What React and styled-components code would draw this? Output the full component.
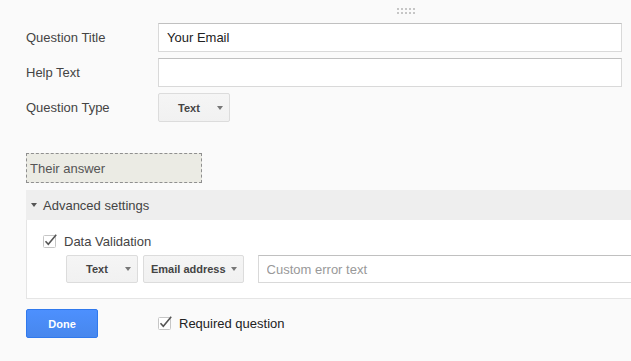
import styled, { createGlobalStyle } from "styled-components";

const GlobalStyle = createGlobalStyle`
  html, body {
    margin: 0;
    padding: 0;
    background: #fafafa;
    font-family: "Liberation Sans", Arial, sans-serif;
    overflow: hidden;
  }
`;

const Page = styled.div`
  width: 631px;
  height: 361px;
  padding-left: 26px;
  box-sizing: border-box;
  overflow: hidden;
`;

const Handle = styled.div`
  height: 23px;
  display: flex;
  padding-left: 371px;
  padding-top: 8px;
  box-sizing: border-box;
`;

const Dots = styled.div`
  width: 18px;
  height: 6px;
  background:
    linear-gradient(90deg, #c6c6c6 2px, transparent 2px) 0 0 / 4px 2px repeat-x,
    linear-gradient(90deg, #c6c6c6 2px, transparent 2px) 0 4px / 4px 2px repeat-x;
`;

const Fields = styled.div`
  display: flex;
  flex-direction: column;
  gap: 6px;
`;

const Row = styled.div`
  display: grid;
  grid-template-columns: 132px 464px;
  align-items: center;
  height: 29px;
`;

const Label = styled.label`
  font-size: 13px;
  color: #444;
`;

const TextInput = styled.input`
  width: ${({ $width }) => $width || "100%"};
  height: ${({ $height }) => $height || 29}px;
  box-sizing: border-box;
  border: 1px solid #d9d9d9;
  border-top-color: #c0c0c0;
  background: #fff;
  padding: 0 8px;
  font-family: inherit;
  font-size: 13px;
  color: #222;
  outline: none;
  &::placeholder {
    color: #999;
  }
`;

const MenuButton = styled.div`
  display: inline-flex;
  flex-shrink: 0;
  align-items: center;
  height: ${({ $height }) => $height || 29}px;
  box-sizing: border-box;
  padding: 0 6px 0 7px;
  border: 1px solid #dcdcdc;
  border-radius: 2px;
  background: linear-gradient(#f5f5f5, #f1f1f1);
  font-size: 11px;
  font-weight: bold;
  color: #444;
  white-space: nowrap;
`;

const Caption = styled.span`
  min-width: 46px;
  text-align: center;
`;

const Arrow = styled.span`
  width: 0;
  height: 0;
  margin-left: 5px;
  border-left: 3.5px solid transparent;
  border-right: 3.5px solid transparent;
  border-top: 4px solid #777;
`;

const AnswerBox = styled.div`
  margin-top: 31px;
  width: 176px;
  height: 30px;
  box-sizing: border-box;
  border: 1px dashed #8f8f8f;
  background: #ebebe4;
  display: flex;
  align-items: center;
  padding-left: 3px;
  font-size: 13px;
  color: #555;
`;

const AdvancedBar = styled.div`
  margin-top: 7px;
  height: 30px;
  background: #eee;
  display: flex;
  align-items: center;
  padding-left: 5px;
  gap: 6px;
  font-size: 13px;
  color: #444;
`;

const SmallArrow = styled.span`
  width: 0;
  height: 0;
  border-left: 3.5px solid transparent;
  border-right: 3.5px solid transparent;
  border-top: 4px solid #555;
`;

const Panel = styled.div`
  background: #fff;
  border-left: 1px solid #e5e5e5;
  border-bottom: 1px solid #e5e5e5;
  height: 79px;
  box-sizing: border-box;
  padding: 14px 0 0 16px;
`;

const CheckRow = styled.div`
  display: flex;
  align-items: center;
  gap: 6px;
  font-size: 13px;
  color: ${({ $color }) => $color || "#444"};
`;

const SelectRow = styled.div`
  display: flex;
  align-items: center;
  margin-top: 6px;
  margin-left: 23px;
  gap: 5px;
`;

const ErrorInput = styled(TextInput)`
  margin-left: 9px;
  flex: 0 0 420px;
`;

const Footer = styled.div`
  display: flex;
  align-items: center;
  margin-top: 10px;
  gap: 60px;
`;

const DoneButton = styled.button`
  width: 72px;
  height: 29px;
  border: 1px solid #3079ed;
  border-radius: 2px;
  background: linear-gradient(#4d90fe, #4787ed);
  color: #fff;
  font-family: inherit;
  font-size: 11px;
  font-weight: bold;
  padding: 0;
`;

const Checkbox = () => (
  <svg width="15" height="15" viewBox="0 0 15 15" style={{ marginTop: -2 }}>
    <rect x="0.5" y="2.5" width="12" height="12" fill="#fff" stroke="#c6c6c6" rx="1" />
    <path d="M2.5 8.2 L5.3 11.2 L13.2 1.8" fill="none" stroke="#555" strokeWidth="1.6" />
  </svg>
);

const Select = ({ children, height }) => (
  <MenuButton $height={height}>
    <Caption>{children}</Caption>
    <Arrow />
  </MenuButton>
);

export default function App() {
  return (
    <>
      <GlobalStyle />
      <Page>
        <Handle>
          <Dots />
        </Handle>
        <Fields>
          <Row>
            <Label>Question Title</Label>
            <TextInput defaultValue="Your Email" />
          </Row>
          <Row>
            <Label>Help Text</Label>
            <TextInput />
          </Row>
          <Row>
            <Label>Question Type</Label>
            <div>
              <Select>Text</Select>
            </div>
          </Row>
        </Fields>
        <AnswerBox>Their answer</AnswerBox>
        <AdvancedBar>
          <SmallArrow />
          Advanced settings
        </AdvancedBar>
        <Panel>
          <CheckRow>
            <Checkbox />
            Data Validation
          </CheckRow>
          <SelectRow>
            <Select height={28}>Text</Select>
            <Select height={28}>Email address</Select>
            <ErrorInput $height={28} placeholder="Custom error text" />
          </SelectRow>
        </Panel>
        <Footer>
          <DoneButton>Done</DoneButton>
          <CheckRow $color="#222">
            <Checkbox />
            Required question
          </CheckRow>
        </Footer>
      </Page>
    </>
  );
}
